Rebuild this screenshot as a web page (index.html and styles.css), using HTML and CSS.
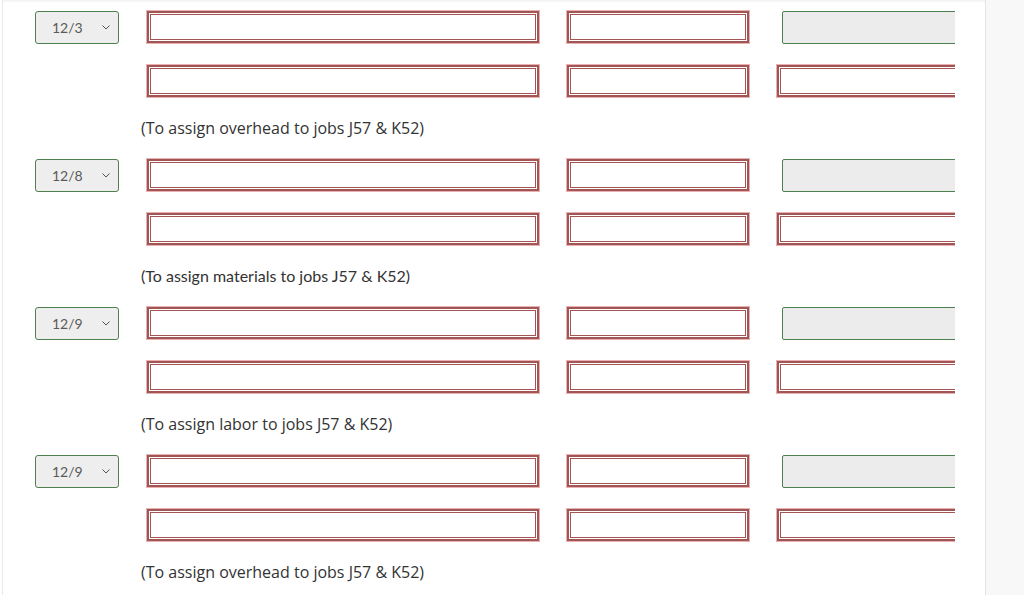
FILE: index.html
```html
<!DOCTYPE html>
<html lang="en">
<head>
    <meta charset="UTF-8">
    <title>Journal entries</title>
    <link rel="stylesheet" href="styles.css">
</head>
<body>
    <div class="page">
        <div class="main">
            <div class="sheet">

                <!-- 12/3 overhead -->
                <div class="entry">
                    <div class="date-select">
                        <span>12/3</span>
                        <svg class="chev" width="8" height="5" viewBox="0 0 8 5"><polyline points="0.5,0.5 4,4 7.5,0.5" fill="none" stroke="#555" stroke-width="1"/></svg>
                    </div>
                    <div class="field account"></div>
                    <div class="field amount"></div>
                    <div class="field locked"></div>

                    <div></div>
                    <div class="field account"></div>
                    <div class="field amount"></div>
                    <div class="field credit"></div>

                    <div class="note alt">(To assign overhead to jobs J57 &amp; K52)</div>
                </div>

                <!-- 12/8 materials -->
                <div class="entry">
                    <div class="date-select">
                        <span>12/8</span>
                        <svg class="chev" width="8" height="5" viewBox="0 0 8 5"><polyline points="0.5,0.5 4,4 7.5,0.5" fill="none" stroke="#555" stroke-width="1"/></svg>
                    </div>
                    <div class="field account"></div>
                    <div class="field amount"></div>
                    <div class="field locked"></div>

                    <div></div>
                    <div class="field account"></div>
                    <div class="field amount"></div>
                    <div class="field credit"></div>

                    <div class="note">(To assign materials to jobs J57 &amp; K52)</div>
                </div>

                <!-- 12/9 labor -->
                <div class="entry">
                    <div class="date-select">
                        <span>12/9</span>
                        <svg class="chev" width="8" height="5" viewBox="0 0 8 5"><polyline points="0.5,0.5 4,4 7.5,0.5" fill="none" stroke="#555" stroke-width="1"/></svg>
                    </div>
                    <div class="field account"></div>
                    <div class="field amount"></div>
                    <div class="field locked"></div>

                    <div></div>
                    <div class="field account"></div>
                    <div class="field amount"></div>
                    <div class="field credit"></div>

                    <div class="note alt">(To assign labor to jobs J57 &amp; K52)</div>
                </div>

                <!-- 12/9 overhead -->
                <div class="entry">
                    <div class="date-select">
                        <span>12/9</span>
                        <svg class="chev" width="8" height="5" viewBox="0 0 8 5"><polyline points="0.5,0.5 4,4 7.5,0.5" fill="none" stroke="#555" stroke-width="1"/></svg>
                    </div>
                    <div class="field account"></div>
                    <div class="field amount"></div>
                    <div class="field locked"></div>

                    <div></div>
                    <div class="field account"></div>
                    <div class="field amount"></div>
                    <div class="field credit"></div>

                    <div class="note alt">(To assign overhead to jobs J57 &amp; K52)</div>
                </div>

            </div>
        </div>
        <div class="side"></div>
    </div>
</body>
</html>
```

FILE: styles.css
```css
* {
    box-sizing: border-box;
    margin: 0;
    padding: 0;
}
html, body {
    height: 100%;
    overflow: hidden;
    background: #ffffff;
    font-family: Lato, "Liberation Sans", sans-serif;
    color: #333;
}
.page {
    display: flex;
    height: 100%;
    padding-left: 2px;
}
.main {
    width: 984px;
    height: 100%;
    border-left: 1px solid #e9e9e9;
    border-right: 1px solid #e4e4e4;
    box-shadow: inset 0 3px 3px -2px rgba(0, 0, 0, 0.08);
}
.side {
    flex: 1;
    background: #f8f8f8;
}
.sheet {
    width: 952px;
    overflow: hidden;
    padding-left: 32px;
}
.entry {
    display: grid;
    grid-template-columns: 84px 393px 183px 200px;
    grid-template-rows: 34px 34px 20px;
    column-gap: 27px;
    row-gap: 20px;
    padding-top: 10px;
    padding-bottom: 10px;
}
.date-select {
    align-self: center;
    height: 33px;
    display: flex;
    align-items: center;
    justify-content: space-between;
    padding: 0 8px 0 16px;
    background: #eeeeee;
    border: 1px solid #4e7f4e;
    border-radius: 3px;
    font-size: 14px;
    color: #5a5a5a;
}
.chev {
    display: block;
}
.field {
    height: 34px;
}
.account, .amount, .credit {
    background: #fff;
    border: 2px solid #a15555;
    box-shadow: inset 0 0 0 1px #fff, inset 0 0 0 2px #a15555, 0 0 0 1px #e8b0b0;
    margin: 1px 0 0 1px;
    height: 32px;
}
.credit {
    width: 200px;
}
.locked {
    align-self: center;
    height: 33px;
    margin-left: 6px;
    background: #ececec;
    border: 1px solid #4e7f4e;
    border-radius: 2px;
}
.note {
    grid-column: 2 / 5;
    align-self: center;
    margin-left: -5px;
    font-size: 16px;
    line-height: 20px;
    color: #333;
}
.note.alt {
    font-family: "Open Sans", sans-serif;
    font-size: 16px;
}
```
